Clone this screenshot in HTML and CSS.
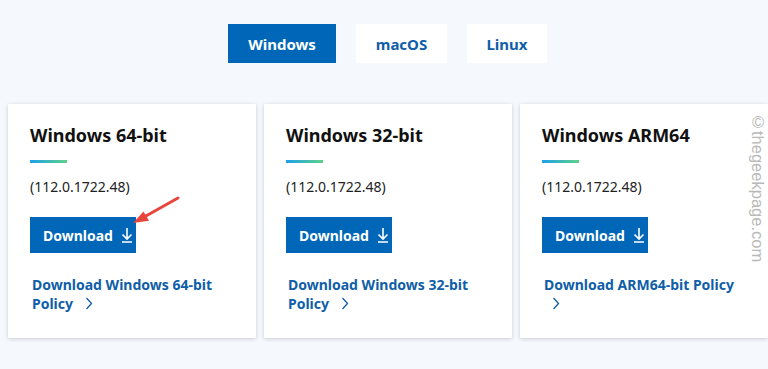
FILE: index.html
```html
<!DOCTYPE html>
<html lang="en">
<head>
  <meta charset="UTF-8">
  <title>Download Edge</title>
  <link rel="stylesheet" href="styles.css">
</head>
<body>

<section class="tabs">
  <button class="tab tab-active">Windows</button>
  <button class="tab tab-mac">macOS</button>
  <button class="tab tab-linux">Linux</button>
</section>

<section class="cards">
  <div class="card">
    <h2>Windows 64-bit</h2>
    <div class="bar"></div>
    <p class="version">(112.0.1722.48)</p>
    <button class="download">Download
      <svg width="12" height="16" viewBox="0 0 12 16"><path d="M6 1v11M1.5 7.5L6 12l4.5-4.5M1 15h10" fill="none" stroke="#fff" stroke-width="1.6"/></svg>
    </button>
    <a class="policy" href="#">Download Windows 64-bit Policy <svg class="chev" width="8" height="13" viewBox="0 0 8 13"><path d="M1.5 1l5 5.5-5 5.5" fill="none" stroke="#0f5ea8" stroke-width="1.3"/></svg></a>
  </div>
  <div class="card">
    <h2>Windows 32-bit</h2>
    <div class="bar"></div>
    <p class="version">(112.0.1722.48)</p>
    <button class="download">Download
      <svg width="12" height="16" viewBox="0 0 12 16"><path d="M6 1v11M1.5 7.5L6 12l4.5-4.5M1 15h10" fill="none" stroke="#fff" stroke-width="1.6"/></svg>
    </button>
    <a class="policy" href="#">Download Windows 32-bit Policy <svg class="chev" width="8" height="13" viewBox="0 0 8 13"><path d="M1.5 1l5 5.5-5 5.5" fill="none" stroke="#0f5ea8" stroke-width="1.3"/></svg></a>
  </div>
  <div class="card">
    <h2>Windows ARM64</h2>
    <div class="bar"></div>
    <p class="version">(112.0.1722.48)</p>
    <button class="download">Download
      <svg width="12" height="16" viewBox="0 0 12 16"><path d="M6 1v11M1.5 7.5L6 12l4.5-4.5M1 15h10" fill="none" stroke="#fff" stroke-width="1.6"/></svg>
    </button>
    <a class="policy" href="#">Download ARM64-bit Policy <svg class="chev" width="8" height="13" viewBox="0 0 8 13"><path d="M1.5 1l5 5.5-5 5.5" fill="none" stroke="#0f5ea8" stroke-width="1.3"/></svg></a>
  </div>
</section>

<!-- red annotation arrow -->
<svg class="pointer" width="56" height="36" viewBox="0 0 56 36">
  <path d="M49 6L16 24.5" stroke="#e8453c" stroke-width="3" stroke-linecap="round"/>
  <path d="M4 31L14.5 19.5L20 28.8Z" fill="#e8453c"/>
</svg>

<div class="watermark">&copy;thegeekpage.com</div>

</body>
</html>
```

FILE: styles.css
```css
/* Page */
body {
  margin: 0;
  background-color: #f5f9fd;
  font-family: "Noto Sans", "Open Sans", sans-serif;
  width: 768px;
  height: 369px;
  overflow: hidden;
  position: relative;
}

/* OS tabs */
.tabs {
  display: flex;
  gap: 20px;
  padding-top: 24px;
  padding-left: 228px;
}
.tab {
  height: 39px;
  border: none;
  background-color: #fff;
  color: #0f5ea8;
  font-family: inherit;
  font-size: 15px;
  font-weight: bold;
  padding: 0;
}
.tab-active {
  width: 108px;
  background-color: #0067b8;
  color: #fff;
}
.tab-mac {
  width: 91px;
}
.tab-linux {
  width: 80px;
}

/* Download cards */
.cards {
  display: flex;
  gap: 8px;
  padding-left: 8px;
  margin-top: 41px;
}
.card {
  width: 248px;
  height: 234px;
  box-sizing: border-box;
  background-color: #fff;
  box-shadow: 0 1px 4px rgba(0, 0, 0, 0.18);
  padding: 19px 20px 0 22px;
  flex-shrink: 0;
}
.card h2 {
  margin: 0;
  font-size: 18px;
  font-weight: bold;
  color: #111;
  line-height: 24px;
}
.bar {
  width: 37px;
  height: 3px;
  margin-top: 13px;
  background: linear-gradient(90deg, #1fa0e8, #5dd18a);
}
.version {
  margin: 14px 0 0;
  font-size: 14px;
  color: #222;
  line-height: 20px;
}
.download {
  display: flex;
  align-items: center;
  gap: 8px;
  margin-top: 20px;
  width: 106px;
  height: 36px;
  padding: 0 0 0 13px;
  border: none;
  background-color: #0067b8;
  color: #fff;
  font-family: inherit;
  font-size: 14px;
  font-weight: bold;
}
.policy {
  display: block;
  margin-top: 22px;
  padding-left: 2px;
  color: #0f5ea8;
  font-size: 14px;
  font-weight: bold;
  line-height: 19px;
  text-decoration: none;
}
.chev {
  margin-left: 8px;
  vertical-align: -1px;
}

/* annotation overlays */
.pointer {
  position: absolute;
  left: 129px;
  top: 192px;
}
.watermark {
  position: absolute;
  left: 748px;
  top: 113px;
  writing-mode: vertical-rl;
  color: #b9b9b9;
  font-family: "Liberation Sans", sans-serif;
  font-size: 16.5px;
}
```
